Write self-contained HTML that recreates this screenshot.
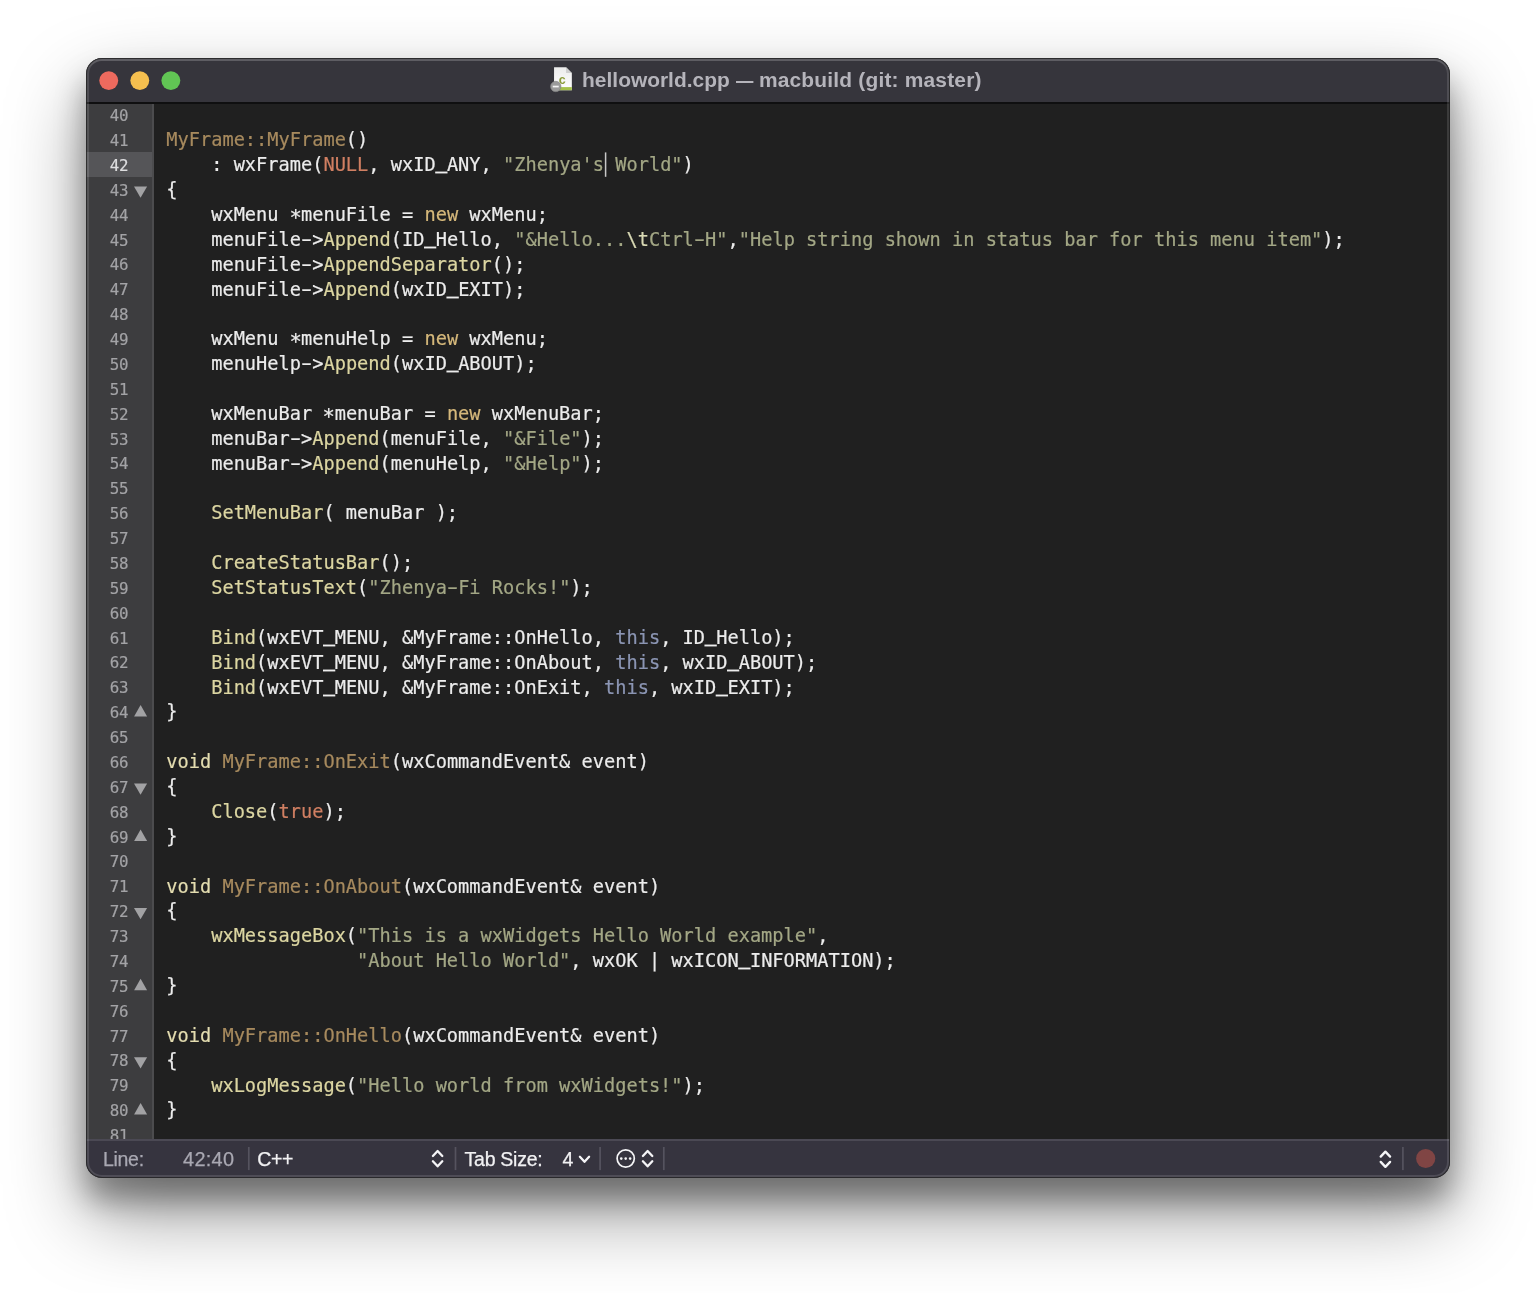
<!DOCTYPE html>
<html lang="en">
<head>
<meta charset="utf-8">
<title>helloworld.cpp — macbuild (git: master)</title>
<style>
*{margin:0;padding:0;box-sizing:border-box}
html,body{width:1536px;height:1293px;background:#fff;overflow:hidden}
body{position:relative;font-family:"Liberation Sans",sans-serif}
#shadow{position:absolute;left:85.8px;top:57.8px;width:1364.2px;height:1120.5px;border-radius:16px;
 box-shadow:0 22px 30px rgba(0,0,0,.35),0 36px 80px rgba(0,0,0,.4)}
#win{position:absolute;left:85.8px;top:57.8px;width:1364.2px;height:1120.5px;border-radius:16px;overflow:hidden;background:#202020}
#win::after{content:"";position:absolute;inset:0;border-radius:16px;box-shadow:inset 0 0 0 1px rgba(30,30,30,.75),inset 0 0 0 3px rgba(255,255,255,.12),inset 0 3px 0 0 rgba(255,255,255,.09);pointer-events:none;z-index:20}
#in{position:absolute;left:0.7px;top:0.2px;width:1363.5px;height:1120.3px;will-change:transform}
#tb{position:absolute;left:-1px;top:-1px;width:1366px;height:47px;background:#36353c;border-bottom:2px solid #0f0f10}
#title{position:absolute;left:497.1px;top:10.1px;height:26px;line-height:26px;font-weight:bold;font-size:20.93px;color:#b5b4bb;white-space:pre}
#title .d{display:inline-block;transform:scaleX(.83);transform-origin:0 50%;margin-right:-3.55px}
#title .r{letter-spacing:.19px}
#dico{position:absolute;left:463px;top:8px}
#ed{position:absolute;left:0;top:0;width:100%;height:1082px}
#gut{position:absolute;left:0;top:0;width:67.6px;height:1082px;background:#3d3d3f;border-right:2px solid #4c4c4e}
.ln{position:absolute;left:0;width:66.4px;height:24.875px;line-height:24.875px;font-family:"DejaVu Sans Mono","Liberation Mono",monospace;font-size:15.8px;letter-spacing:-0.25px;color:#a3a3a6;-webkit-text-stroke:0.2px}
.ln b{position:absolute;right:24.1px;top:1.7px;font-weight:normal}
.ln.cur{background:#555558;color:#dedee0}
.cl{position:absolute;left:80.3px;height:24.875px;line-height:24.875px;font-family:"DejaVu Sans Mono","Liberation Mono",monospace;font-size:18.65px;color:#ececec;white-space:pre;-webkit-text-stroke:0.2px}
.h{display:inline-block;transform:scaleX(1.7)}
.u{display:inline-block;transform:translateY(-3.4px);-webkit-text-stroke:1px}
.a{display:inline-block;transform:translateY(3.7px) scale(1.1)}
.cls{color:#a78a5e}.con{color:#d07f62}.str{color:#a3a785}.esc{color:#d9d9b4}.kw{color:#d5b87b}.fn{color:#dcd6a2}.this{color:#8b95b3}.ty{color:#e4ddb0}
#rstrip{display:none}
#sb{position:absolute;left:0;top:1081.4px;width:100%;height:38.6px;background:#36343f;border-top:2px solid #4b4954;font-size:19.5px;letter-spacing:-0.27px;color:#f1f1f3;-webkit-text-stroke:0.25px}
#sb span{position:absolute;top:6.0px;height:24px;line-height:24px;white-space:pre}
#sb .dim{color:#a9a8b2}
#ov{position:absolute;left:0;top:0;width:1536px;height:1293px;pointer-events:none}
</style>
</head>
<body>
<div id="shadow"></div>
<div id="win">
<div id="in">
 <div id="ed">
  <div id="gut">
<div class="ln" style="top:44.550px"><b>40</b></div>
<div class="ln" style="top:69.425px"><b>41</b></div>
<div class="ln cur" style="top:94.300px"><b>42</b></div>
<div class="ln" style="top:119.175px"><b>43</b></div>
<div class="ln" style="top:144.050px"><b>44</b></div>
<div class="ln" style="top:168.925px"><b>45</b></div>
<div class="ln" style="top:193.800px"><b>46</b></div>
<div class="ln" style="top:218.675px"><b>47</b></div>
<div class="ln" style="top:243.550px"><b>48</b></div>
<div class="ln" style="top:268.425px"><b>49</b></div>
<div class="ln" style="top:293.300px"><b>50</b></div>
<div class="ln" style="top:318.175px"><b>51</b></div>
<div class="ln" style="top:343.050px"><b>52</b></div>
<div class="ln" style="top:367.925px"><b>53</b></div>
<div class="ln" style="top:392.800px"><b>54</b></div>
<div class="ln" style="top:417.675px"><b>55</b></div>
<div class="ln" style="top:442.550px"><b>56</b></div>
<div class="ln" style="top:467.425px"><b>57</b></div>
<div class="ln" style="top:492.300px"><b>58</b></div>
<div class="ln" style="top:517.175px"><b>59</b></div>
<div class="ln" style="top:542.050px"><b>60</b></div>
<div class="ln" style="top:566.925px"><b>61</b></div>
<div class="ln" style="top:591.800px"><b>62</b></div>
<div class="ln" style="top:616.675px"><b>63</b></div>
<div class="ln" style="top:641.550px"><b>64</b></div>
<div class="ln" style="top:666.425px"><b>65</b></div>
<div class="ln" style="top:691.300px"><b>66</b></div>
<div class="ln" style="top:716.175px"><b>67</b></div>
<div class="ln" style="top:741.050px"><b>68</b></div>
<div class="ln" style="top:765.925px"><b>69</b></div>
<div class="ln" style="top:790.800px"><b>70</b></div>
<div class="ln" style="top:815.675px"><b>71</b></div>
<div class="ln" style="top:840.550px"><b>72</b></div>
<div class="ln" style="top:865.425px"><b>73</b></div>
<div class="ln" style="top:890.300px"><b>74</b></div>
<div class="ln" style="top:915.175px"><b>75</b></div>
<div class="ln" style="top:940.050px"><b>76</b></div>
<div class="ln" style="top:964.925px"><b>77</b></div>
<div class="ln" style="top:989.800px"><b>78</b></div>
<div class="ln" style="top:1014.675px"><b>79</b></div>
<div class="ln" style="top:1039.550px"><b>80</b></div>
<div class="ln" style="top:1064.425px"><b>81</b></div>
  </div>
  <div id="code">
<div class="cl" style="top:70.325px"><span class="cls">MyFrame::MyFrame</span>()</div>
<div class="cl" style="top:95.200px">    : wxFrame(<span class="con">NULL</span>, wxID<span class="u">_</span>ANY, <span class="str">"Zhenya's World"</span>)</div>
<div class="cl" style="top:120.075px">{</div>
<div class="cl" style="top:144.950px">    wxMenu <span class="a">*</span>menuFile = <span class="kw">new</span> wxMenu;</div>
<div class="cl" style="top:169.825px">    menuFile<span class="h">-</span>&gt;<span class="fn">Append</span>(ID<span class="u">_</span>Hello, <span class="str">"&amp;Hello...</span><span class="esc">\t</span><span class="str">Ctrl<span class="h">-</span>H"</span>,<span class="str">"Help string shown in status bar for this menu item"</span>);</div>
<div class="cl" style="top:194.700px">    menuFile<span class="h">-</span>&gt;<span class="fn">AppendSeparator</span>();</div>
<div class="cl" style="top:219.575px">    menuFile<span class="h">-</span>&gt;<span class="fn">Append</span>(wxID<span class="u">_</span>EXIT);</div>
<div class="cl" style="top:269.325px">    wxMenu <span class="a">*</span>menuHelp = <span class="kw">new</span> wxMenu;</div>
<div class="cl" style="top:294.200px">    menuHelp<span class="h">-</span>&gt;<span class="fn">Append</span>(wxID<span class="u">_</span>ABOUT);</div>
<div class="cl" style="top:343.950px">    wxMenuBar <span class="a">*</span>menuBar = <span class="kw">new</span> wxMenuBar;</div>
<div class="cl" style="top:368.825px">    menuBar<span class="h">-</span>&gt;<span class="fn">Append</span>(menuFile, <span class="str">"&amp;File"</span>);</div>
<div class="cl" style="top:393.700px">    menuBar<span class="h">-</span>&gt;<span class="fn">Append</span>(menuHelp, <span class="str">"&amp;Help"</span>);</div>
<div class="cl" style="top:443.450px">    <span class="fn">SetMenuBar</span>( menuBar );</div>
<div class="cl" style="top:493.200px">    <span class="fn">CreateStatusBar</span>();</div>
<div class="cl" style="top:518.075px">    <span class="fn">SetStatusText</span>(<span class="str">"Zhenya<span class="h">-</span>Fi Rocks!"</span>);</div>
<div class="cl" style="top:567.825px">    <span class="fn">Bind</span>(wxEVT<span class="u">_</span>MENU, &amp;MyFrame::OnHello, <span class="this">this</span>, ID<span class="u">_</span>Hello);</div>
<div class="cl" style="top:592.700px">    <span class="fn">Bind</span>(wxEVT<span class="u">_</span>MENU, &amp;MyFrame::OnAbout, <span class="this">this</span>, wxID<span class="u">_</span>ABOUT);</div>
<div class="cl" style="top:617.575px">    <span class="fn">Bind</span>(wxEVT<span class="u">_</span>MENU, &amp;MyFrame::OnExit, <span class="this">this</span>, wxID<span class="u">_</span>EXIT);</div>
<div class="cl" style="top:642.450px">}</div>
<div class="cl" style="top:692.200px"><span class="ty">void</span> <span class="cls">MyFrame::OnExit</span>(wxCommandEvent&amp; event)</div>
<div class="cl" style="top:717.075px">{</div>
<div class="cl" style="top:741.950px">    <span class="fn">Close</span>(<span class="con">true</span>);</div>
<div class="cl" style="top:766.825px">}</div>
<div class="cl" style="top:816.575px"><span class="ty">void</span> <span class="cls">MyFrame::OnAbout</span>(wxCommandEvent&amp; event)</div>
<div class="cl" style="top:841.450px">{</div>
<div class="cl" style="top:866.325px">    <span class="fn">wxMessageBox</span>(<span class="str">"This is a wxWidgets Hello World example"</span>,</div>
<div class="cl" style="top:891.200px">                 <span class="str">"About Hello World"</span>, wxOK | wxICON<span class="u">_</span>INFORMATION);</div>
<div class="cl" style="top:916.075px">}</div>
<div class="cl" style="top:965.825px"><span class="ty">void</span> <span class="cls">MyFrame::OnHello</span>(wxCommandEvent&amp; event)</div>
<div class="cl" style="top:990.700px">{</div>
<div class="cl" style="top:1015.575px">    <span class="fn">wxLogMessage</span>(<span class="str">"Hello world from wxWidgets!"</span>);</div>
<div class="cl" style="top:1040.450px">}</div>
  </div>
  <div id="rstrip"></div>
 </div>
 <div id="tb">
  <svg id="dico" width="30" height="30" viewBox="0 0 30 30">
   <defs><linearGradient id="pg" x1="0" y1="0" x2="0" y2="1"><stop offset="0" stop-color="#ececec"/><stop offset="1" stop-color="#ffffff"/></linearGradient></defs>
   <g transform="translate(0.45,0.1)">
   <path d="M5.6 2.2 H17.6 L23.4 8 V25.1 H5.6 Z" fill="url(#pg)"/>
   <path d="M17.6 2.2 L23.4 8 H17.6 Z" fill="#cfcfcf"/>
   <rect x="5.6" y="22" width="17.8" height="3.1" fill="#a5c14a"/>
   <text x="10.2" y="18.9" font-family="Liberation Sans, sans-serif" font-weight="bold" font-size="12.5" fill="#8c9c3c">c</text>
   <circle cx="7.3" cy="21.4" r="5.2" fill="#9b9b9b" stroke="#7d7d7d" stroke-width="0.6"/>
   <rect x="4.3" y="20.6" width="6" height="1.7" fill="#f4f4f4"/>
   </g>
  </svg>
  <div id="title">helloworld.cpp <span class="d">—</span><span class="r"> macbuild (git: master)</span></div>
 </div>
 <div id="sb">
  <span class="dim" style="left:16.9px">Line:</span>
  <span class="dim" style="right:1215.2px;font-size:19.9px;letter-spacing:0.3px">42:40</span>
  <span style="left:171.2px">C++</span>
  <span style="left:378.6px">Tab Size:</span>
  <span style="left:476.6px">4</span>
 </div>
</div>
</div>
<svg id="ov" width="1536" height="1293" viewBox="0 0 1536 1293">
 <g id="lights">
  <circle cx="108.75" cy="80.6" r="9.45" fill="#ed6a5e"/>
  <circle cx="139.8" cy="80.6" r="9.45" fill="#f5bf4f"/>
  <circle cx="170.85" cy="80.6" r="9.45" fill="#61c554"/>
 </g>
 <rect id="caret" x="604.85" y="152.4" width="1.5" height="24.4" fill="#c8c8c8"/>
 <g id="folds" fill="#a2a2a4">
  <path d="M134 186.58 H147.1 L140.55 197.78 Z"/>
  <path d="M134.1 716.55 H147.1 L140.6 705.10 Z"/>
  <path d="M134 783.57 H147.1 L140.55 794.77 Z"/>
  <path d="M134.1 840.92 H147.1 L140.6 829.47 Z"/>
  <path d="M134 907.95 H147.1 L140.55 919.15 Z"/>
  <path d="M134.1 990.17 H147.1 L140.6 978.72 Z"/>
  <path d="M134 1057.20 H147.1 L140.55 1068.40 Z"/>
  <path d="M134.1 1114.55 H147.1 L140.6 1103.10 Z"/>
 </g>
 <g id="seps" fill="#55535f">
  <rect x="247.95" y="1147" width="1.7" height="23.1"/>
  <rect x="454.65" y="1147" width="1.7" height="23.1"/>
  <rect x="599.25" y="1147" width="1.7" height="23.1"/>
  <rect x="662.95" y="1147" width="1.7" height="23.1"/>
  <rect x="1402.05" y="1147" width="1.7" height="23.1"/>
 </g>
 <g id="chev" fill="none" stroke="#f5f5f7" stroke-width="2.3" stroke-linecap="round" stroke-linejoin="round">
  <path d="M432.9 1156 L437.6 1151 L442.3 1156 M432.9 1161.3 L437.6 1166.3 L442.3 1161.3"/>
  <path d="M579.9 1156.8 L584.5 1161.8 L589.1 1156.8"/>
  <path d="M642.9 1156 L647.6 1151 L652.3 1156 M642.9 1161.3 L647.6 1166.3 L652.3 1161.3"/>
  <path d="M1380.7 1156.6 L1385.4 1151.6 L1390.1 1156.6 M1380.7 1161.9 L1385.4 1166.9 L1390.1 1161.9"/>
 </g>
 <circle cx="625.7" cy="1158.55" r="8.6" fill="none" stroke="#f5f5f7" stroke-width="1.7"/>
 <g fill="#f5f5f7"><circle cx="621.25" cy="1158.6" r="1.3"/><circle cx="625.7" cy="1158.6" r="1.3"/><circle cx="630.15" cy="1158.6" r="1.3"/></g>
 <circle cx="1425.7" cy="1158.5" r="9.6" fill="#804544"/>
</svg>
</body>
</html>
